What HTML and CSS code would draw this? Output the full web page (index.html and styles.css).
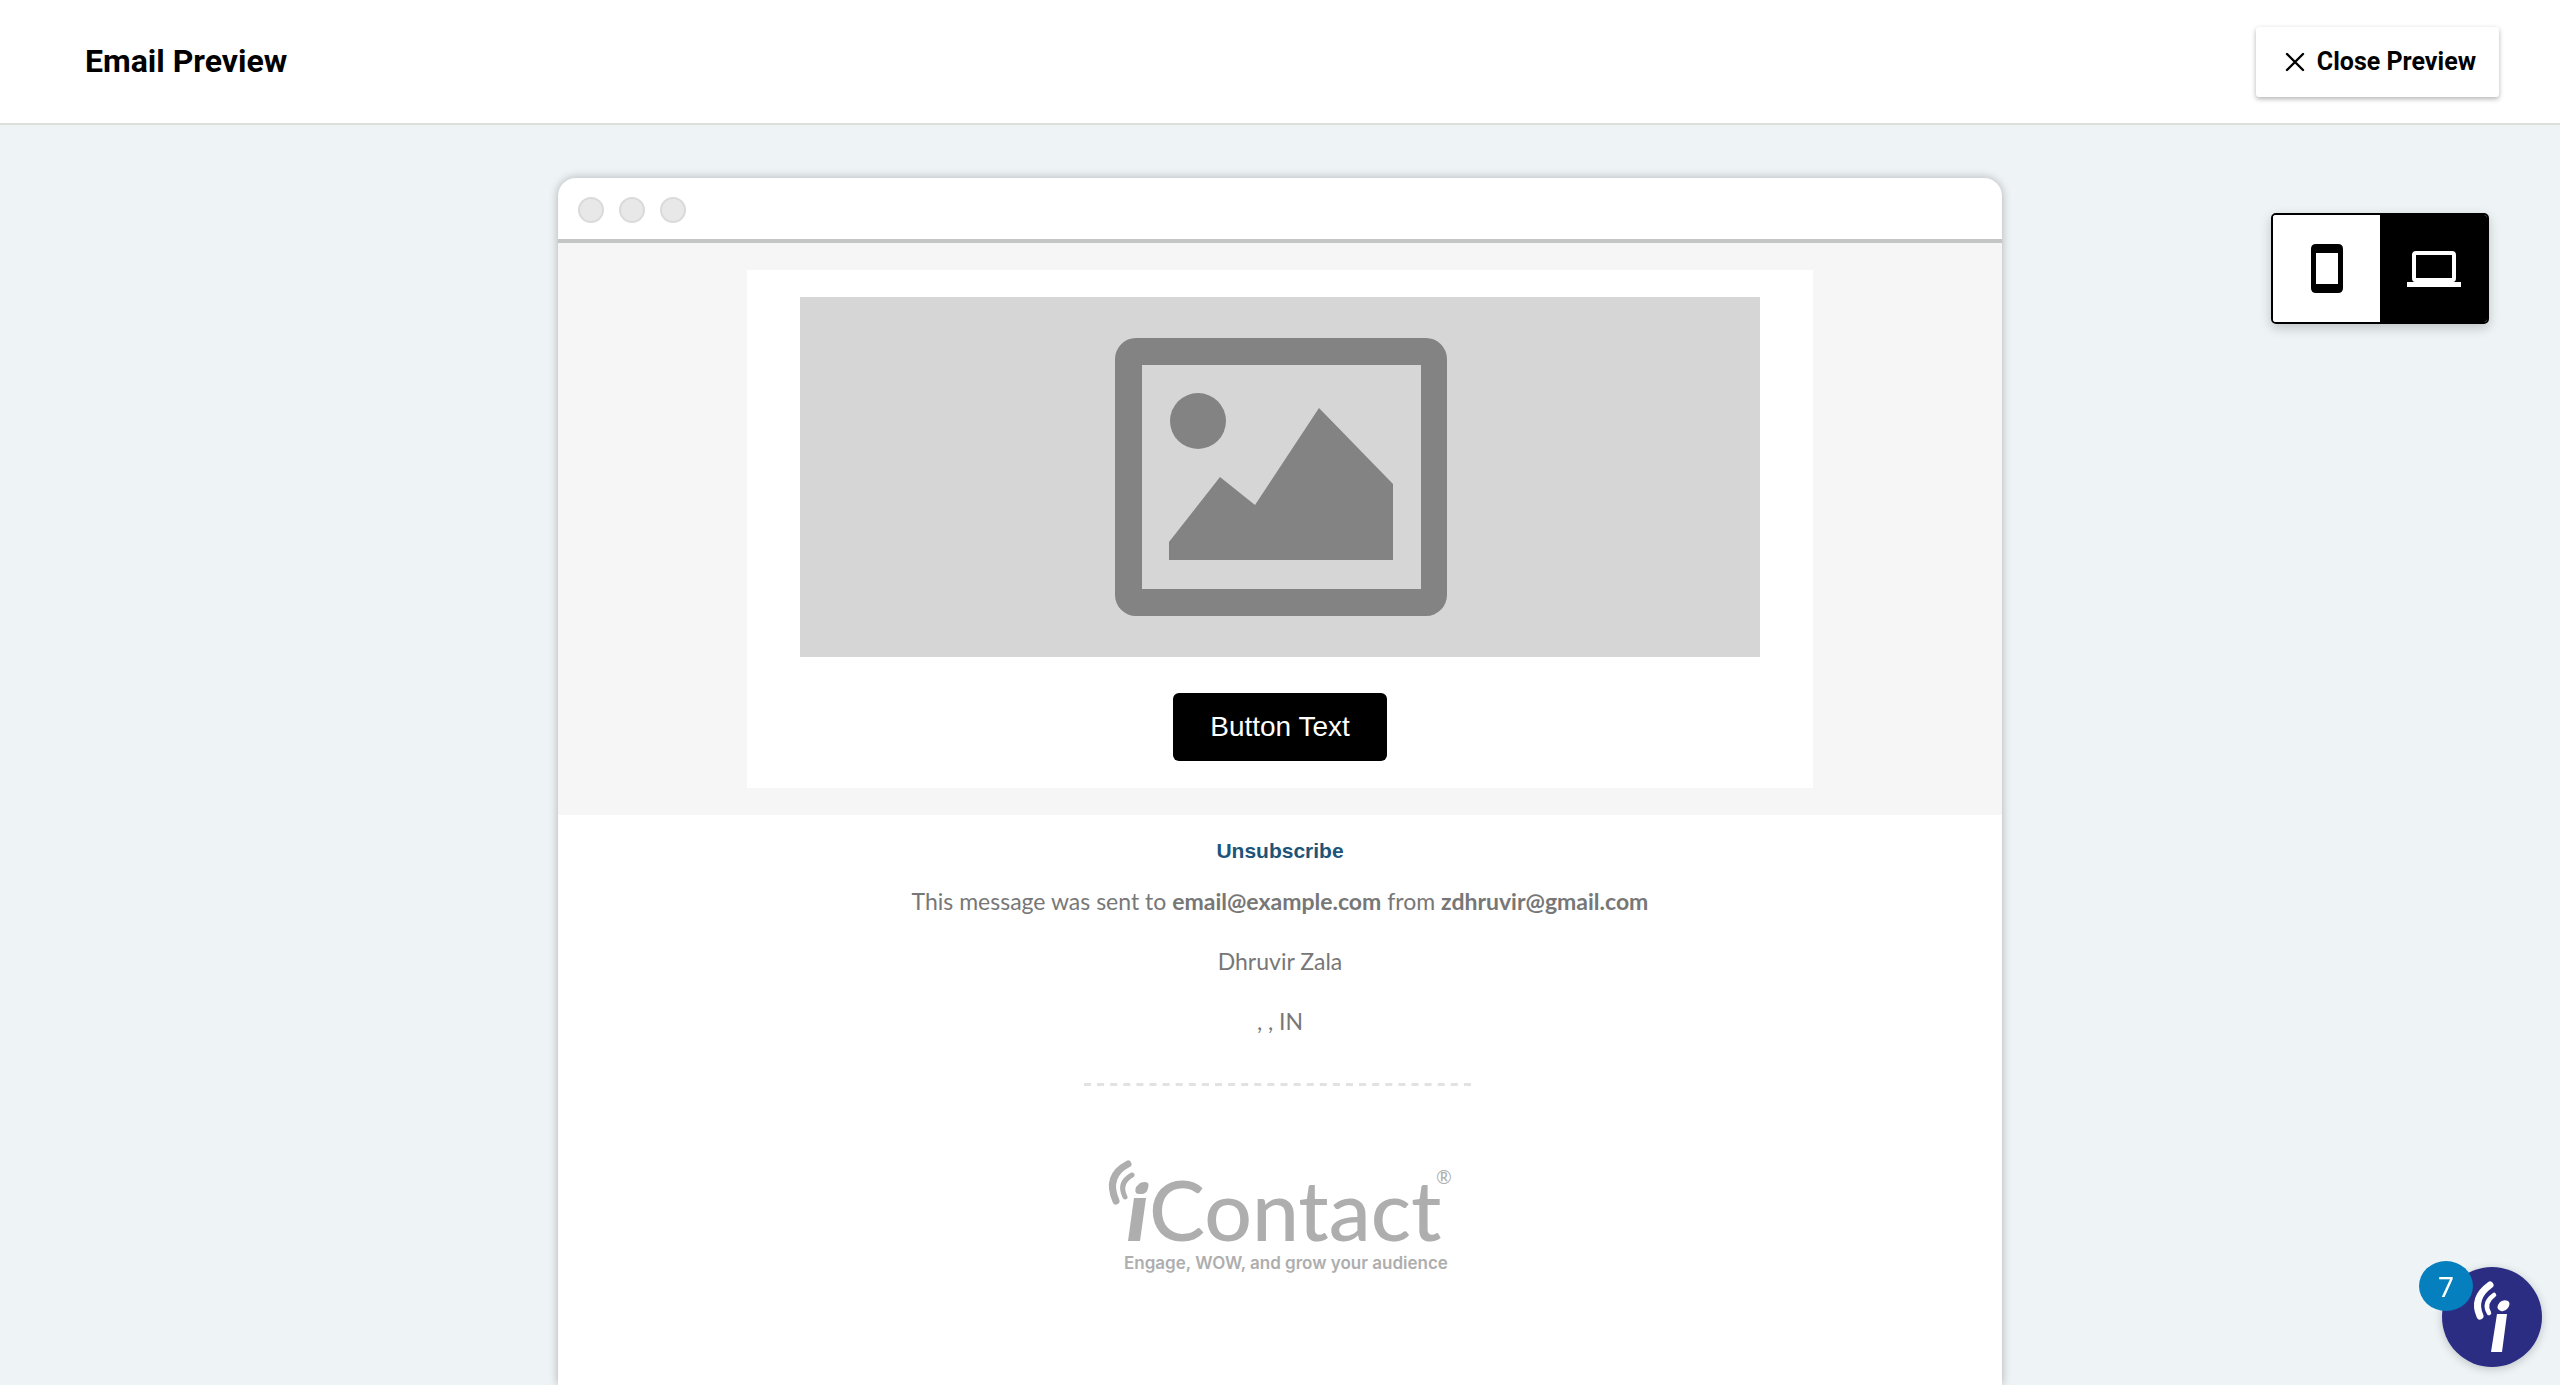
FILE: index.html
```html
<!DOCTYPE html>
<html lang="en">
<head>
    <meta charset="UTF-8">
    <meta name="viewport" content="width=device-width, initial-scale=1.0">
    <title>Email Preview</title>
    <link rel="stylesheet" href="styles.css">
</head>
<body>
    <header class="topbar">
        <h1>Email Preview</h1>
        <button type="button" class="close-btn">
            <svg width="20" height="20" viewBox="0 0 20 20" aria-hidden="true">
                <path d="M2 2L18 18M18 2L2 18" fill="none" stroke="#000" stroke-width="2.4" stroke-linecap="round"/>
            </svg>
            Close Preview
        </button>
    </header>

    <main class="stage">
        <section class="browser">
            <div class="browser-bar">
                <span class="dot"></span>
                <span class="dot"></span>
                <span class="dot"></span>
            </div>
            <div class="email-body">
                <div class="email-card">
                    <div class="placeholder">
                        <svg width="334" height="280" viewBox="-2 -1 334 280" role="img" aria-label="Image placeholder">
                            <path fill="#838383" fill-rule="evenodd" d="M21 0H311A21 21 0 0 1 332 21V257A21 21 0 0 1 311 278H21A21 21 0 0 1 0 257V21A21 21 0 0 1 21 0ZM27 27V251H306V27Z"/>
                            <circle cx="83" cy="83" r="28" fill="#838383"/>
                            <path fill="#838383" d="M54 222V204L105 139L140 167L204 70L278 146V222Z"/>
                        </svg>
                    </div>
                    <a href="#" class="email-btn">Button Text</a>
                </div>
            </div>
            <footer class="email-footer">
                <a href="#" class="unsubscribe">Unsubscribe</a>
                <p>This message was sent to <strong>email@example.com</strong> from <strong>zdhruvir@gmail.com</strong></p>
                <p>Dhruvir Zala</p>
                <p>, , IN</p>
                <svg class="divider" width="392" height="3" viewBox="0 0 392 3" aria-hidden="true">
                    <path d="M0 1.5H392" stroke="#e2e2e2" stroke-width="3" stroke-dasharray="7 6.1"/>
                </svg>
                <svg class="logo" width="344" height="114" viewBox="0 0 344 114" role="img" aria-label="iContact">
                    <g fill="none" stroke="#aeaeae" stroke-linecap="round">
                        <path d="M20 4Q-3 16 8 41" stroke-width="7"/>
                        <path d="M24 15Q10 23 17 37" stroke-width="5"/>
                    </g>
                    <path fill="#aeaeae" d="M30 25Q32 22 37 22Q42 22 40 28Q39 34 33 34H30Q26 33 28 27ZM26 38H38L32 81H20Z"/>
                    <text class="logo-name" x="41" y="81">Contact</text>
                    <text class="logo-mark" x="328" y="24">®</text>
                    <text class="logo-tag" x="16" y="109">Engage, WOW, and grow your audience</text>
                </svg>
            </footer>
        </section>

        <div class="device-toggle">
            <button type="button" class="device" aria-label="Mobile preview">
                <svg width="54" height="54" viewBox="0 0 54 54" aria-hidden="true">
                    <path fill="#000" fill-rule="evenodd" d="M15 2H38Q43 2 43 7V46Q43 51 38 51H16Q11 51 11 46V7Q11 2 16 2ZM16 11V42H38V11Z"/>
                </svg>
            </button>
            <button type="button" class="device active" aria-label="Desktop preview">
                <svg width="54" height="54" viewBox="0 0 54 54" aria-hidden="true">
                    <path fill="#fff" fill-rule="evenodd" d="M9 9H45Q49 9 49 13V36Q49 40 46 40H54V45H0V40H8Q5 40 5 36V13Q5 9 9 9ZM9 13V36H45V13Z"/>
                </svg>
            </button>
        </div>
    </main>

    <button type="button" class="chat" aria-label="Open help, 7 new messages">
        <svg width="100" height="100" viewBox="0 0 100 100" aria-hidden="true">
            <g fill="none" stroke="#fff" stroke-linecap="round">
                <path d="M48 18Q30 31 38 49" stroke-width="7"/>
                <path d="M52 28Q41 36 47 46" stroke-width="4.5"/>
            </g>
            <path fill="#fff" d="M58 35Q62 32 66 34Q69 36 66 41Q63 45 59 44Q54 42 56 38ZM55 47H65L60 85H49Z"/>
        </svg>
        <span class="badge">7</span>
    </button>
</body>
</html>
```
FILE: styles.css
```css
* {
    box-sizing: border-box;
}
body {
    margin: 0;
    height: 100vh;
    display: flex;
    flex-direction: column;
    overflow: hidden;
    background-color: #eef3f6;
    font-family: Roboto, sans-serif;
    color: #000;
}
button {
    font: inherit;
    border: none;
    padding: 0;
    cursor: pointer;
}
svg {
    display: block;
}
.topbar {
    display: flex;
    justify-content: space-between;
    align-items: center;
    height: 125px;
    padding: 0 61px 0 85px;
    background-color: #fff;
    border-bottom: 2px solid #dddfdb;
}
h1 {
    margin: 0;
    padding-bottom: 2px;
    font-size: 32px;
    font-weight: 700;
}
.close-btn {
    display: flex;
    align-items: center;
    gap: 12px;
    height: 70px;
    padding: 0 23px 0 29px;
    background-color: #fff;
    border-radius: 3px;
    box-shadow: 0 2px 5px rgba(0, 0, 0, 0.3);
    font-size: 25px;
    font-weight: 700;
}
.stage {
    flex: 1;
    display: grid;
    grid-template-columns: 1fr minmax(0, 1444px) 1fr;
    padding-top: 53px;
}
.browser {
    grid-column: 2;
    display: flex;
    flex-direction: column;
    background-color: #fff;
    border-radius: 18px 18px 0 0;
    box-shadow: 0 0 10px rgba(0, 0, 0, 0.28);
}
.browser-bar {
    display: flex;
    align-items: center;
    gap: 15px;
    height: 65px;
    padding: 3px 20px 0;
    border-bottom: 4px solid #c4c6c6;
}
.dot {
    width: 26px;
    height: 26px;
    border: 2px solid #dadada;
    border-radius: 50%;
    background-color: #e8e8e8;
}
.email-body {
    display: flex;
    justify-content: center;
    padding: 27px 0;
    background-color: #f6f6f6;
}
.email-card {
    display: flex;
    flex-direction: column;
    align-items: center;
    gap: 36px;
    padding: 27px 53px;
    background-color: #fff;
}
.placeholder {
    display: flex;
    justify-content: center;
    align-items: center;
    width: 960px;
    max-width: 100%;
    height: 360px;
    background-color: #d6d6d6;
}
.email-btn {
    padding: 18px 37px;
    border-radius: 6px;
    background-color: #000;
    color: #fff;
    font-family: "Liberation Sans", Arial, sans-serif;
    font-size: 28px;
    line-height: 32px;
    text-decoration: none;
}
.email-footer {
    display: flex;
    flex-direction: column;
    align-items: center;
    padding-top: 20px;
    font-family: Lato, sans-serif;
    font-size: 23px;
    line-height: 32px;
    color: #777;
}
.unsubscribe {
    margin-bottom: 18px;
    color: #1d5478;
    font-family: "Liberation Sans", Arial, sans-serif;
    font-size: 21px;
    font-weight: 700;
    text-decoration: none;
}
.email-footer p {
    margin: 0 0 28px;
}
.divider {
    margin: 18px 0 74px;
}
.logo {
    overflow: visible;
}
.logo text {
    fill: #aeaeae;
}
.logo-name {
    font-family: Lato, sans-serif;
    font-size: 84px;
    font-weight: 500;
}
.logo-mark {
    font-family: Lato, sans-serif;
    font-size: 19px;
}
.logo-tag {
    font-family: Inter, sans-serif;
    font-size: 17px;
    font-weight: 600;
}
.device-toggle {
    justify-self: end;
    align-self: start;
    display: flex;
    margin: 35px 71px 0 0;
    border: 2px solid #000;
    border-radius: 5px;
    overflow: hidden;
    box-shadow: 0 4px 12px rgba(0, 0, 0, 0.2);
}
.device {
    display: flex;
    align-items: center;
    justify-content: center;
    width: 107px;
    height: 107px;
    background-color: #fff;
}
.device.active {
    background-color: #000;
}
/* help launcher floats over the page */
.chat {
    position: fixed;
    right: 18px;
    bottom: 18px;
    width: 100px;
    height: 100px;
    border-radius: 50%;
    background-color: #2b2d83;
    box-shadow: 0 2px 10px rgba(0, 0, 0, 0.2);
}
.badge {
    position: absolute;
    top: -6px;
    left: -23px;
    width: 54px;
    height: 50px;
    border-radius: 50%;
    background-color: #057fbd;
    color: #fff;
    font-family: "Noto Sans", sans-serif;
    font-size: 28px;
    line-height: 50px;
    text-align: center;
}
```
